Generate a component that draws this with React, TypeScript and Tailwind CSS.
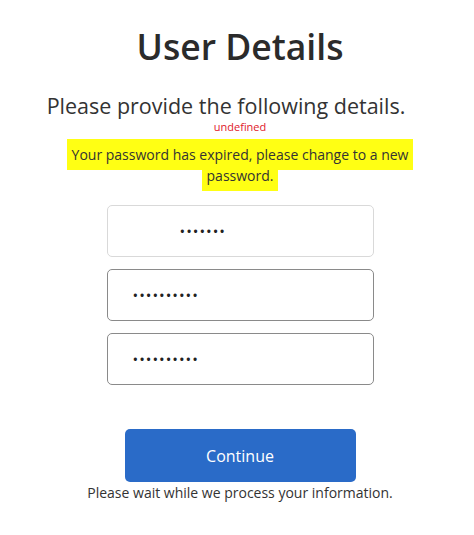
import React from "react";

const Field = ({ dots, light, center }: { dots: string; light?: boolean; center?: boolean }) => (
  <div
    className={`w-[267px] h-[52px] rounded-[5px] border bg-white flex items-center ${
      light ? "border-[#d9d9d9]" : "border-[#8a8a8a]"
    } ${center ? "pl-[72px]" : "pl-[25px]"}`}
  >
    <span className="text-[15px] tracking-[1px] text-[#222] leading-none">{dots}</span>
  </div>
);

export default function App() {
  return (
    <div
      className="w-[474px] h-[535px] bg-white flex flex-col items-center pl-[6px] text-[#333]"
      style={{ fontFamily: '"Open Sans", "Noto Sans", sans-serif' }}
    >
      <h1 className="mt-[22px] text-[35.5px] font-semibold leading-[48px] text-[#2b2b2b]">User Details</h1>
      <p className="mt-[22px] mr-[28px] text-[21.5px] leading-[28px] text-[#333]">
        Please provide the following details.
      </p>
      <p className="text-[11px] leading-[14px] text-[#e0202a]">undefined</p>
      <p className="mt-[10px] w-[360px] text-center text-[14px] leading-[21px] text-[#333]">
        <span className="bg-[#ffff14] box-decoration-clone px-[5px] py-[6px]">
          <span className="relative">Your password has expired, please change to a new password.</span>
        </span>
      </p>
      <div className="mt-[19px] flex flex-col gap-[12px]">
        <Field dots="•••••••" light center />
        <Field dots="••••••••••" />
        <Field dots="••••••••••" />
      </div>
      <button className="mt-[44px] w-[231px] h-[53px] rounded-[5px] bg-[#2a6bc8] text-white text-[16px]">
        Continue
      </button>
      <p className="mt-[2px] text-[14px] leading-[18px] text-[#333]">Please wait while we process your information.</p>
    </div>
  );
}
